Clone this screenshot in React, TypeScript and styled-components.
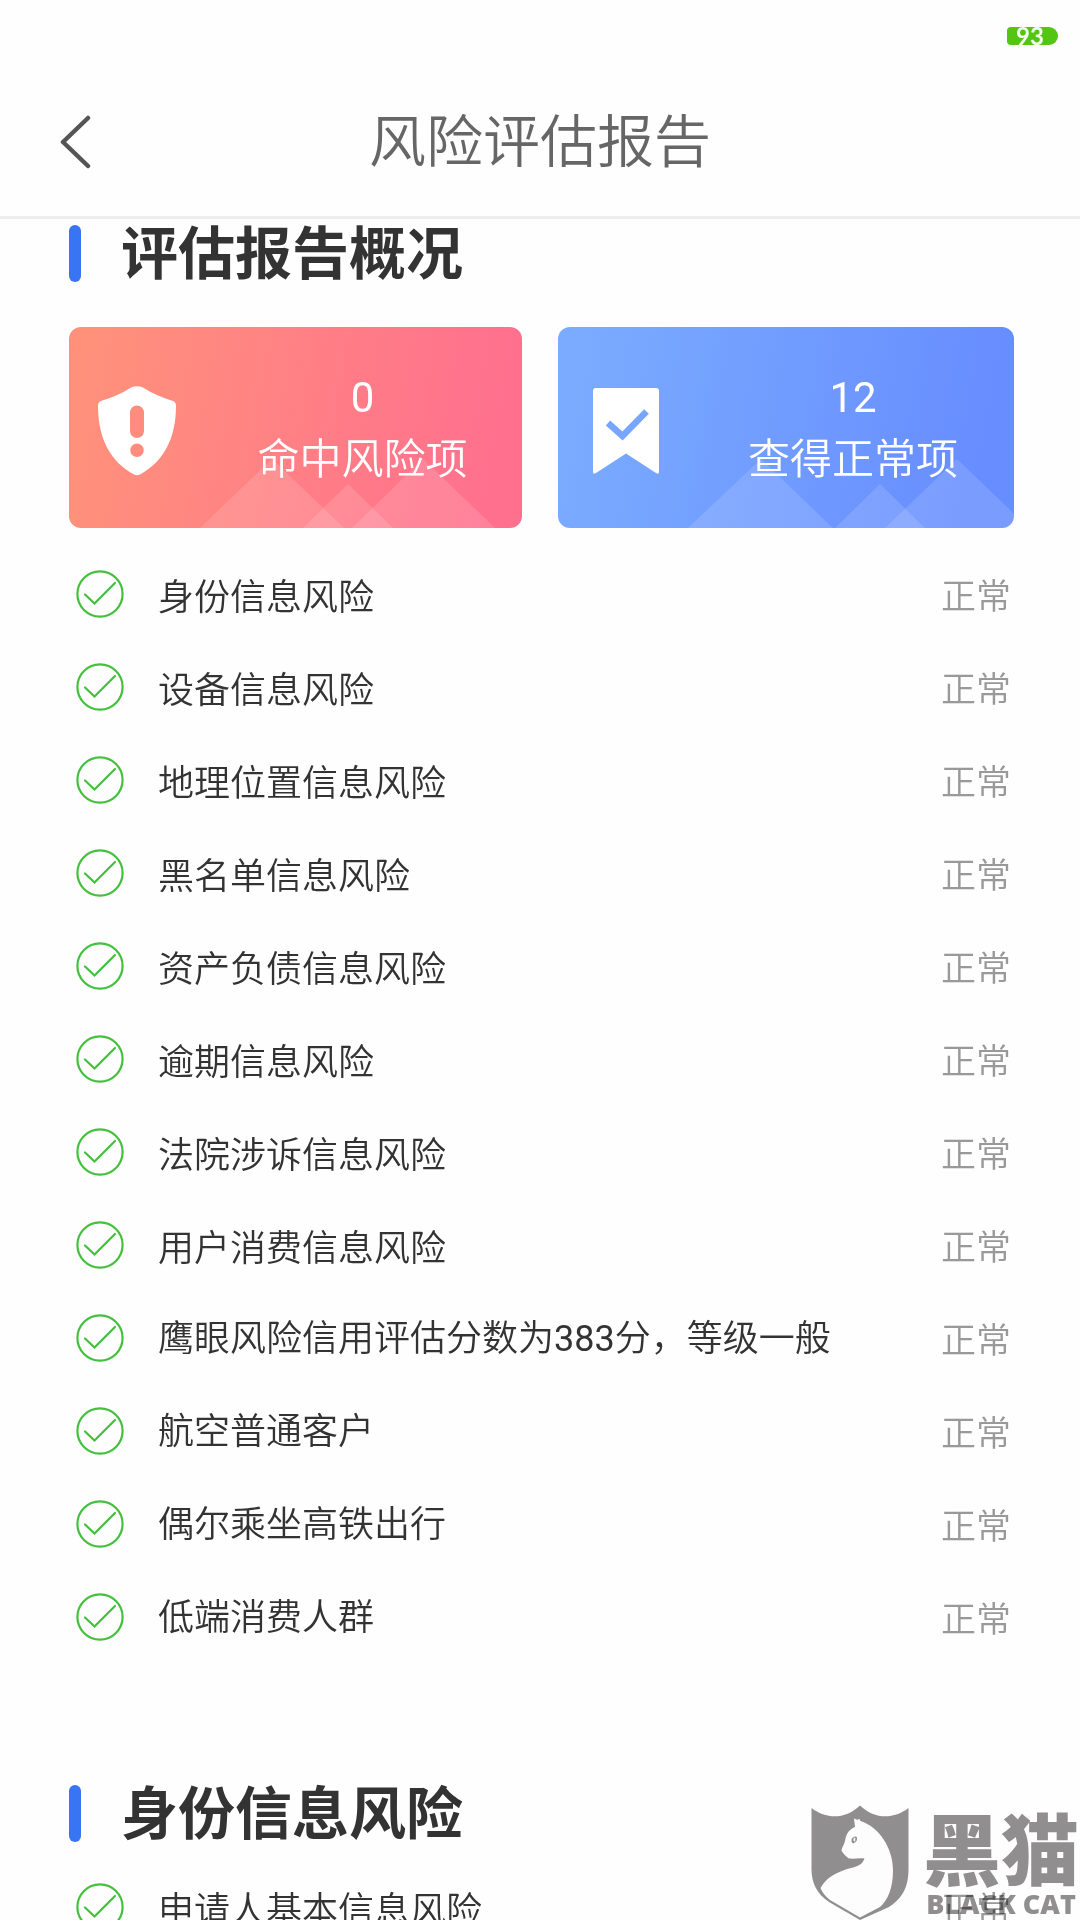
import React from "react";
import styled, { createGlobalStyle } from "styled-components";

const GlobalStyle = createGlobalStyle`
  * { box-sizing: border-box; }
  body { margin: 0; background: #fefefe; }
`;

const Screen = styled.div`
  position: relative;
  display: flex;
  flex-direction: column;
  height: 100vh;
  overflow: hidden;
  background: #fefefe;
  color: #333;
  font-family: Roboto, "Noto Sans CJK SC", sans-serif;
`;

const StatusBar = styled.div`
  display: flex;
  justify-content: flex-end;
  align-items: flex-end;
  height: 45px;
  padding-right: 22px;
`;

const Battery = styled.span`
  width: 51px;
  height: 18px;
  padding-right: 5px;
  border-radius: 4px 9px 9px 4px;
  background: #55c514;
  color: #f4fff0;
  font: 700 24px/18px Lato, sans-serif;
  text-align: center;
`;

const NavBar = styled.header`
  display: grid;
  grid-template-columns: 150px 1fr 150px;
  align-items: center;
  height: 174px;
  padding-top: 24px;
  border-bottom: 3px solid #ededed;
`;

const BackButton = styled.button`
  display: flex;
  align-items: center;
  height: 80px;
  padding: 0 0 0 58px;
  border: 0;
  background: none;
  color: #555;
`;

const PageTitle = styled.h1`
  margin: 0;
  color: #666;
  font-size: 57px;
  font-weight: 350;
  line-height: 80px;
  text-align: center;
`;

const Content = styled.main`
  flex: 1;
  min-height: 0;
  overflow-y: auto;
  scrollbar-width: none;
  padding: 0 66px 0 69px;
`;

const Section = styled.section`
  & + & { margin-top: 116px; }
`;

const SectionTitle = styled.h2`
  display: flex;
  align-items: center;
  gap: 40px;
  height: 68px;
  margin: 0;
  padding-top: 4px;
  font-size: 57px;
  font-weight: 700;
  line-height: 64px;

  &::before {
    content: "";
    width: 12px;
    height: 57px;
    margin-bottom: 4px;
    border-radius: 6px;
    background: #3875f2;
  }
`;

const Cards = styled.div`
  display: grid;
  grid-template-columns: 453fr 456fr;
  gap: 36px;
  padding: 40px 0 6px;
`;

const Card = styled.article<{ $from: string; $to: string }>`
  position: relative;
  display: flex;
  align-items: center;
  height: 201px;
  border-radius: 12px;
  overflow: hidden;
  background: linear-gradient(100deg, ${(p) => p.$from} 5%, ${(p) => p.$to} 92%);
  color: #fff;
`;

const Hills = styled.svg`
  position: absolute;
  left: 0;
  bottom: 0;
`;

const CardIcon = styled.div`
  display: flex;
  justify-content: center;
  width: 136px;
  padding-top: 6px;
`;

const CardText = styled.div`
  position: relative;
  flex: 1;
  padding: 2px 2px 0 0;
  font-size: 42px;
  line-height: 62px;
  text-align: center;
`;

const CardLine = styled.div`
  font-weight: 350;
`;

const CardCount = styled.div`
  font-weight: 400;
`;

const List = styled.ul`
  margin: 0;
  padding: 13px 0 0;
  list-style: none;
`;

const Row = styled.li`
  display: flex;
  align-items: center;
  height: 93px;
  padding: 0 3px 0 7px;
`;

const RowName = styled.span<{ $raised?: boolean }>`
  flex: 1;
  padding-top: ${(p) => (p.$raised ? 2 : 8)}px;
  margin-left: 34px;
  font-size: 36px;
  font-weight: 350;
  line-height: 48px;
`;

const Score = styled.span`
  font-weight: 400;
`;

const RowState = styled.span`
  padding-top: 8px;
  color: #999;
  font-size: 35px;
  font-weight: 350;
  line-height: 48px;
`;

const Watermark = styled.aside`
  position: absolute;
  right: 1px;
  bottom: 0;
  display: flex;
  align-items: flex-end;
  gap: 14px;
  color: #918f90;
  mix-blend-mode: multiply;
`;

const Brand = styled.div`
  display: flex;
  flex-direction: column;
  align-items: center;
  width: 156px;
  white-space: nowrap;
`;

const BrandName = styled.span`
  font: 900 78px/84px "Noto Sans CJK SC", sans-serif;
`;

const BrandLatin = styled.span`
  font: 800 27px/32px "Open Sans", sans-serif;
`;

type Check = { name: React.ReactNode; raised?: boolean };

const checks: Check[] = [
  { name: "身份信息风险" },
  { name: "设备信息风险" },
  { name: "地理位置信息风险" },
  { name: "黑名单信息风险" },
  { name: "资产负债信息风险" },
  { name: "逾期信息风险" },
  { name: "法院涉诉信息风险" },
  { name: "用户消费信息风险" },
  { name: <>鹰眼风险信用评估分数为<Score>383</Score>分，等级一般</>, raised: true },
  { name: "航空普通客户", raised: true },
  { name: "偶尔乘坐高铁出行", raised: true },
  { name: "低端消费人群", raised: true },
];

function CheckIcon() {
  return (
    <svg width="48" height="48" viewBox="0 0 48 48" fill="none" stroke="#43c03c" strokeWidth="2.2" aria-hidden="true">
      <circle cx="24" cy="24" r="22.6" />
      <path d="M9 24.5 18.5 33.5 39 13" strokeLinecap="round" />
    </svg>
  );
}

function CheckRow({ name, raised }: Check) {
  return (
    <Row>
      <CheckIcon />
      <RowName $raised={raised}>{name}</RowName>
      <RowState>正常</RowState>
    </Row>
  );
}

function RiskIcon() {
  return (
    <svg width="80" height="90" viewBox="0 0 80 90" aria-hidden="true">
      <path
        fill="#fff"
        fillRule="evenodd"
        d="M34 1.5Q40-1 46 1.5C56 8 66 12 76 15Q79 16 79 20C79 53 66 76 43 88.500Q40 90 37 88.500C14 76 1 53 1 20Q1 16 4 15C14 12 24 8 34 1.500ZM40 19.500A7 7 0 0 0 33 26.500V45A7 7 0 0 0 47 45V26.500A7 7 0 0 0 40 19.500ZM40 57.500A6.700 6.700 0 1 0 40 71A6.700 6.700 0 1 0 40 57.500Z"
      />
    </svg>
  );
}

function NormalIcon() {
  return (
    <svg width="66" height="86" viewBox="0 0 66 86" aria-hidden="true">
      <path fill="#fff" d="M3 0H63Q66 0 66 3V84Q66 87 63 85L33 65.500 3 85Q0 87 0 84V3Q0 0 3 0Z" />
      <path d="M15 35 29.500 48 53.500 23.500" fill="none" stroke="#76a6ff" strokeWidth="6.500" />
    </svg>
  );
}

function CatShield() {
  return (
    <svg width="98" height="115" viewBox="0 0 98 115" aria-hidden="true">
      <path
        fill="currentColor"
        d="M.5 3C15 14 34 15 49 .5 64 15 83 14 97.500 3V64C97.500 84 90 94 78 102L49 115 18 97C6 89 .5 78 .5 64Z"
      />
      <path
        fill="#fefefe"
        d="M43 13.500 47 15 48 13.500 49.500 16C68 22 82 43 82 65 82 83 77 95 69 102L49 112.500 19 95C14 91 11 87 9.500 83 15 73 25 67 40 63 49 61 52 58 53.500 53.500 48 53 43 54 38 53.500 34 51 32 48 30.500 45.500 31 42 33 40 34 36 35 28 39 24 44 22Z"
      />
      <path fill="currentColor" d="M40.500 34Q44 30 46 32.500 46.500 37 42 38.500Q40 37 40.500 34Z" />
      <ellipse cx="43.400" cy="34.600" rx="1" ry="2" fill="#fefefe" />
    </svg>
  );
}

export default function App() {
  return (
    <Screen>
      <GlobalStyle />
      <StatusBar>
        <Battery>93</Battery>
      </StatusBar>
      <NavBar>
        <BackButton type="button" aria-label="返回">
          <svg width="34" height="56" viewBox="0 0 34 56" fill="none" stroke="currentColor" strokeWidth="4.500" strokeLinecap="round" strokeLinejoin="round">
            <path d="M30 3 5 27 30 51" />
          </svg>
        </BackButton>
        <PageTitle>风险评估报告</PageTitle>
      </NavBar>
      <Content>
        <Section>
          <SectionTitle>评估报告概况</SectionTitle>
          <Cards>
            <Card $from="#ff917b" $to="#ff708e">
              <Hills width="453" height="70" viewBox="0 0 453 70" fill="#fff" fillOpacity="0.13" aria-hidden="true">
                <path d="M131 70 203 1 275 70Z" />
                <path d="M234 70 279 26 324 70Z" />
                <path d="M283 70 354 1 426 70Z" />
              </Hills>
              <CardIcon><RiskIcon /></CardIcon>
              <CardText>
                <CardCount>0</CardCount>
                <CardLine>命中风险项</CardLine>
              </CardText>
            </Card>
            <Card $from="#7aabff" $to="#678dff">
              <Hills width="456" height="70" viewBox="0 0 456 70" fill="#fff" fillOpacity="0.13" aria-hidden="true">
                <path d="M130 70 203 1 275 70Z" />
                <path d="M277 70 322 26 367 70Z" />
                <path d="M327 70 399 1 471 70Z" />
              </Hills>
              <CardIcon><NormalIcon /></CardIcon>
              <CardText>
                <CardCount>12</CardCount>
                <CardLine>查得正常项</CardLine>
              </CardText>
            </Card>
          </Cards>
          <List>
            {checks.map((c, i) => (
              <CheckRow key={i} name={c.name} raised={c.raised} />
            ))}
          </List>
        </Section>
        <Section>
          <SectionTitle>身份信息风险</SectionTitle>
          <List>
            <CheckRow name="申请人基本信息风险" />
          </List>
        </Section>
      </Content>
      <Watermark>
        <CatShield />
        <Brand>
          <BrandName>黑猫</BrandName>
          <BrandLatin>BLACK CAT</BrandLatin>
        </Brand>
      </Watermark>
    </Screen>
  );
}
